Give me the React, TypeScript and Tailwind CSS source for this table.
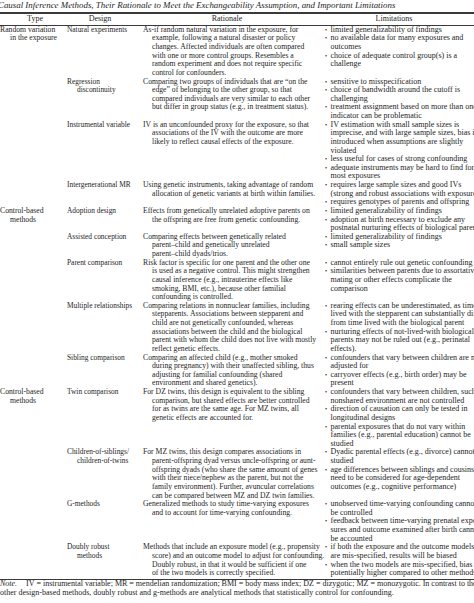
import React from "react";

type Row = {
  type?: string[];
  design: string[];
  rationale: string[];
  limits: string[][];
};

const rows: Row[] = [
  {
    type: ["Random variation", "in the exposure"],
    design: ["Natural experiments"],
    rationale: [
      "As-if random natural variation in the exposure, for",
      "example, following a natural disaster or policy",
      "changes. Affected individuals are often compared",
      "with one or more control groups. Resembles a",
      "random experiment and does not require specific",
      "control for confounders.",
    ],
    limits: [
      ["limited generalizability of findings"],
      ["no available data for many exposures and", "outcomes"],
      ["choice of adequate control group(s) is a", "challenge"],
    ],
  },
  {
    design: ["Regression", "discontinuity"],
    rationale: [
      "Comparing two groups of individuals that are \u201Con the",
      "edge\u201D of belonging to the other group, so that",
      "compared individuals are very similar to each other",
      "but differ in group status (e.g., in treatment status).",
    ],
    limits: [
      ["sensitive to misspecification"],
      ["choice of bandwidth around the cutoff is", "challenging"],
      ["treatment assignment based on more than one", "indicator can be problematic"],
    ],
  },
  {
    design: ["Instrumental variable"],
    rationale: [
      "IV is an unconfounded proxy for the exposure, so that",
      "associations of the IV with the outcome are more",
      "likely to reflect causal effects of the exposure.",
    ],
    limits: [
      [
        "IV estimation with small sample sizes is",
        "imprecise, and with large sample sizes, bias is",
        "introduced when assumptions are slightly",
        "violated",
      ],
      ["less useful for cases of strong confounding"],
      ["adequate instruments may be hard to find for", "most exposures"],
    ],
  },
  {
    design: ["Intergenerational MR"],
    rationale: [
      "Using genetic instruments, taking advantage of random",
      "allocation of genetic variants at birth within families.",
    ],
    limits: [
      ["requires large sample sizes and good IVs", "(strong and robust associations with exposure)"],
      ["requires genotypes of parents and offspring"],
    ],
  },
  {
    type: ["Control-based", "methods"],
    design: ["Adoption design"],
    rationale: [
      "Effects from genetically unrelated adoptive parents on",
      "the offspring are free from genetic confounding.",
    ],
    limits: [
      ["limited generalizability of findings"],
      ["adoption at birth necessary to exclude any", "postnatal nurturing effects of biological parents"],
    ],
  },
  {
    design: ["Assisted conception"],
    rationale: [
      "Comparing effects between genetically related",
      "parent\u2013child and genetically unrelated",
      "parent\u2013child dyads/trios.",
    ],
    limits: [["limited generalizability of findings"], ["small sample sizes"]],
  },
  {
    design: ["Parent comparison"],
    rationale: [
      "Risk factor is specific for one parent and the other one",
      "is used as a negative control. This might strengthen",
      "causal inference (e.g., intrauterine effects like",
      "smoking, BMI, etc.), because other familial",
      "confounding is controlled.",
    ],
    limits: [
      ["cannot entirely rule out genetic confounding"],
      ["similarities between parents due to assortative", "mating or other effects complicate the", "comparison"],
    ],
  },
  {
    design: ["Multiple relationships"],
    rationale: [
      "Comparing relations in nonnuclear families, including",
      "stepparents. Associations between stepparent and",
      "child are not genetically confounded, whereas",
      "associations between the child and the biological",
      "parent with whom the child does not live with mostly",
      "reflect genetic effects.",
    ],
    limits: [
      [
        "rearing effects can be underestimated, as time",
        "lived with the stepparent can substantially differ",
        "from time lived with the biological parent",
      ],
      [
        "nurturing effects of not-lived-with biological",
        "parents may not be ruled out (e.g., perinatal",
        "effects).",
      ],
    ],
  },
  {
    design: ["Sibling comparison"],
    rationale: [
      "Comparing an affected child (e.g., mother smoked",
      "during pregnancy) with their unaffected sibling, thus",
      "adjusting for familial confounding (shared",
      "environment and shared genetics).",
    ],
    limits: [
      ["confounders that vary between children are not", "adjusted for"],
      ["carryover effects (e.g., birth order) may be", "present"],
    ],
  },
  {
    type: ["Control-based", "methods"],
    design: ["Twin comparison"],
    rationale: [
      "For DZ twins, this design is equivalent to the sibling",
      "comparison, but shared effects are better controlled",
      "for as twins are the same age. For MZ twins, all",
      "genetic effects are accounted for.",
    ],
    limits: [
      ["confounders that vary between children, such as", "nonshared environment are not controlled"],
      ["direction of causation can only be tested in", "longitudinal designs"],
      [
        "parental exposures that do not vary within",
        "families (e.g., parental education) cannot be",
        "studied",
      ],
    ],
  },
  {
    design: ["Children-of-siblings/", "children-of-twins"],
    rationale: [
      "For MZ twins, this design compares associations in",
      "parent-offspring dyad versus uncle-offspring or aunt-",
      "offspring dyads (who share the same amount of genes",
      "with their niece/nephew as the parent, but not the",
      "family environment). Further, avuncular correlations",
      "can be compared between MZ and DZ twin families.",
    ],
    limits: [
      ["Dyadic parental effects (e.g., divorce) cannot be", "studied"],
      [
        "age differences between siblings and cousins",
        "need to be considered for age-dependent",
        "outcomes (e.g., cognitive performance)",
      ],
    ],
  },
  {
    design: ["G-methods"],
    rationale: [
      "Generalized methods to study time-varying exposures",
      "and to account for time-varying confounding.",
    ],
    limits: [
      ["unobserved time-varying confounding cannot", "be controlled"],
      [
        "feedback between time-varying prenatal expo-",
        "sures and outcome examined after birth cannot",
        "be accounted",
      ],
    ],
  },
  {
    design: ["Doubly robust", "methods"],
    rationale: [
      "Methods that include an exposure model (e.g., propensity",
      "score) and an outcome model to adjust for confounding.",
      "Doubly robust, in that it would be sufficient if one",
      "of the two models is correctly specified.",
    ],
    limits: [
      ["if both the exposure and the outcome models", "are mis-specified, results will be biased"],
      ["when the two models are mis-specified, bias is", "potentially higher compared to other methods"],
    ],
  },
];

function Lines({ lines, indent }: { lines: string[]; indent: string }) {
  return (
    <div>
      {lines.map((l, i) => (
        <div key={i} className={i === 0 ? "whitespace-nowrap" : `whitespace-nowrap ${indent}`}>
          {l}
        </div>
      ))}
    </div>
  );
}

export default function App() {
  return (
    <div className="w-[474px] h-[603px] overflow-hidden bg-white text-[#1e1e1e] font-['Liberation_Serif','Times_New_Roman',serif] text-[8px] leading-[8.63px]">
      <div className="w-[520px]">
        <div className="h-[10px] leading-[10px] italic whitespace-nowrap text-[8.9px] ml-[-2px]">
          Causal Inference Methods, Their Rationale to Meet the Exchangeability Assumption, and Important Limitations
        </div>
        <div className="mt-[2px] h-[1.5px] w-[474px] bg-[#3a3a3a]" />
        <div className="flex h-[11px] items-center">
          <div className="w-[70px] text-center">Type</div>
          <div className="w-[60px] text-center">Design</div>
          <div className="w-[194px] text-center">Rationale</div>
          <div className="w-[140px] text-center">Limitations</div>
        </div>
        <div className="h-[1px] w-[474px] bg-[#3a3a3a]" />
        <div className="pt-[0.3px]">
          {rows.map((r, i) => (
            <div key={i} className="grid grid-cols-[67px_76px_182px_1fr]">
              <div className="text-[7.7px]">{r.type ? <Lines lines={r.type} indent="pl-[10px]" /> : null}</div>
              <div className="text-[7.4px]">
                <Lines lines={r.design} indent="pl-[10px]" />
              </div>
              <div className="text-[7.7px]">
                <Lines lines={r.rationale} indent="pl-[9px]" />
              </div>
              <div>
                {r.limits.map((item, j) => (
                  <div key={j} className="flex">
                    <div className="w-[5.5px] shrink-0 text-[6px]">{"\u2022"}</div>
                    <Lines lines={item} indent="" />
                  </div>
                ))}
              </div>
            </div>
          ))}
        </div>
        <div className="mt-[1px] h-[1.5px] w-[474px] bg-[#3a3a3a]" />
        <div className="whitespace-nowrap">
          <span className="italic">Note.</span>
          <span className="pl-[9px]">
            IV = instrumental variable; MR = mendelian randomization; BMI = body mass index; DZ = dizygotic; MZ = monozygotic. In contrast to the
          </span>
        </div>
        <div className="whitespace-nowrap">
          other design-based methods, doubly robust and g-methods are analytical methods that statistically control for confounding.
        </div>
      </div>
    </div>
  );
}
